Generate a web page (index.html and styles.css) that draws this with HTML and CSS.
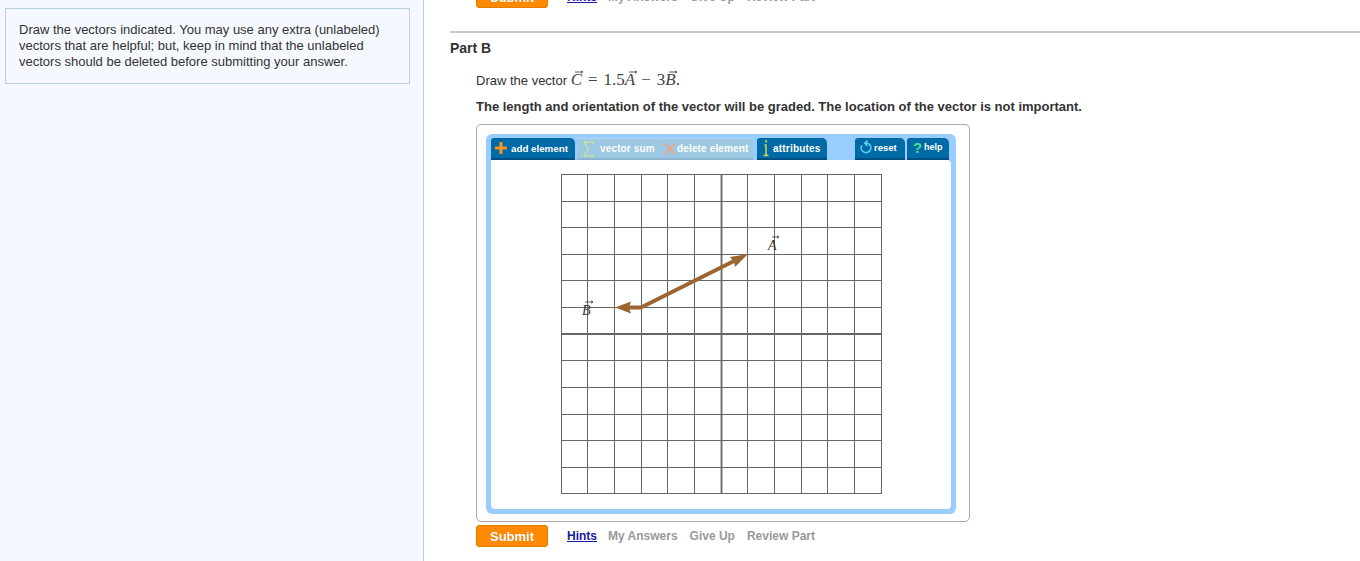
FILE: index.html
```html
<!DOCTYPE html>
<html lang="en">
<head>
<meta charset="utf-8">
<title>Part B</title>
<link rel="stylesheet" href="styles.css">
</head>
<body>
<div class="page">
  <aside class="sidebar">
    <div class="note">Draw the vectors indicated. You may use any extra (unlabeled) vectors that are helpful; but, keep in mind that the unlabeled vectors should be deleted before submitting your answer.</div>
  </aside>
  <main class="main">
    <div class="actions actions-top">
      <button class="submit" type="button">Submit</button>
      <nav class="links"><a class="hint" href="#">Hints</a><span>My Answers</span><span>Give Up</span><span>Review Part</span></nav>
    </div>
    <hr class="rule">
    <h2 class="part">Part B</h2>
    <div class="content">
      <p class="prompt">Draw the vector <span class="math"><span class="vec">C<svg class="arrow" viewBox="0 0 8 4"><path d="M0 2H7.500M6 .8 7.800 2 6 3.200"/></svg></span><span class="op">=</span>1.5<span class="vec">A<svg class="arrow" viewBox="0 0 8 4"><path d="M0 2H7.500M6 .8 7.800 2 6 3.200"/></svg></span><span class="op">−</span>3<span class="vec">B<svg class="arrow" viewBox="0 0 8 4"><path d="M0 2H7.500M6 .8 7.800 2 6 3.200"/></svg></span>.</span></p>
      <p class="graded">The length and orientation of the vector will be graded. The location of the vector is not important.</p>
      <div class="applet">
        <div class="frame">
          <div class="toolbar">
            <button class="tool tool-add" type="button"><svg class="ico" viewBox="0 0 12 12"><path d="M6 0V12M0 6H12" stroke="#f7941d" stroke-width="3"/></svg>add element</button>
            <button class="tool tool-off tool-sum" type="button"><svg class="ico" viewBox="0 0 11 16"><path d="M10.500 3V1H1L5.500 8 1 15H10.500V13" fill="none" stroke="#d9ee7c" stroke-width="1"/></svg>vector sum</button>
            <button class="tool tool-off tool-del" type="button"><svg class="ico" viewBox="0 0 12 12"><path d="M1 1 11 11M11 1 1 11" stroke="#f0a58a" stroke-width="2"/></svg>delete element</button>
            <button class="tool tool-attr" type="button"><svg class="ico" viewBox="0 0 6 18"><path d="M3 1V3.500M3 5.500V16.500M.5 16.500H5.500M1.500 6H3" fill="none" stroke="#d9d84a" stroke-width="1.500"/></svg>attributes</button>
            <span class="spacer"></span>
            <button class="tool tool-reset" type="button"><svg class="ico" viewBox="0 0 12 14"><path d="M1.800 5.500A4.800 4.800 0 1 0 7.500 3.200H5M7.500 .6 4.800 3.200 7.500 5.800" fill="none" stroke="#4fd0ee" stroke-width="1.600"/></svg>reset</button>
            <button class="tool tool-help" type="button"><span class="q">?</span>help</button>
          </div>
          <div class="canvas">
            <svg class="grid" viewBox="0 0 321 321" width="321" height="321">
              <g class="lines">
                <path d="M.5 0V320M26.500 0V320M53.500 0V320M80.500 0V320M106.500 0V320M133.500 0V320M186.500 0V320M213.500 0V320M240.500 0V320M266.500 0V320M293.500 0V320M320.500 0V320"/>
                <path d="M0 .5H321M0 27.500H321M0 53.500H321M0 80.500H321M0 106.500H321M0 133.500H321M0 186.500H321M0 213.500H321M0 240.500H321M0 266.500H321M0 293.500H321M0 319.500H321"/>
              </g>
              <path class="axis" d="M160.500 0V320M0 160H321"/>
              <path class="vector" d="M80 133.500 176 85.500"/>
              <path class="vector" d="M81 133.500H66"/>
              <path class="head" d="M187 80 169 83 173 88 174 93Z"/>
              <path class="head" d="M54 133.500 70 127.500 68 133.500 70 139.500Z"/>
              <text class="label" x="207" y="76">A</text>
              <path class="label-arrow" d="M211 63H217.500M216 61.800 218 63 216 64.200"/>
              <text class="label" x="21" y="141">B</text>
              <path class="label-arrow" d="M24 128H31.500M30 126.800 32 128 30 129.200"/>
            </svg>
          </div>
        </div>
      </div>
      <div class="actions actions-bottom">
        <button class="submit" type="button">Submit</button>
        <nav class="links"><a class="hint" href="#">Hints</a><span>My Answers</span><span>Give Up</span><span>Review Part</span></nav>
      </div>
    </div>
  </main>
</div>
</body>
</html>
```
FILE: styles.css
```css
* { box-sizing: border-box; }
html, body { margin: 0; height: 561px; overflow: hidden; background: #fff; }
body { font-family: "Liberation Sans", Arial, sans-serif; font-size: 12px; color: #333; }
.page { display: flex; height: 561px; overflow: hidden; }
.sidebar { width: 424px; flex: none; background: #f5f9ff; border-right: 1px solid #bccfdf; padding: 8px 13px 0 5px; }
.note { height: 76px; border: 1px solid #b7d0e2; padding: 13px 13px 0; line-height: 16px; font-size: 13px; color: #333; }
.main { flex: 1; padding-left: 26px; margin-top: -14px; min-width: 0; }
.actions { display: flex; align-items: center; height: 22px; }
.actions-top { margin-left: 26px; }
.actions-bottom { margin-top: 3px; }
.submit { width: 72px; height: 22px; padding: 0; border: 1px solid #e57d00; border-radius: 3px; background: #ff8a00; color: #fff; font: bold 13px "Liberation Sans", Arial, sans-serif; text-shadow: 0 0 1px #b86a00; }
.links { display: flex; gap: 12px; margin-left: 19px; font-weight: bold; font-size: 12px; color: #999; }
.hint { margin-right: -1px; color: #1a1a9c; text-decoration: underline; }
.rule { height: 2px; margin: 23px 0 0; border: 0; background: #c9c9c9; }
.part { margin: 7px 0 0; font-size: 14px; line-height: 16px; font-weight: bold; color: #333; }
.content { margin-left: 26px; }
.prompt { margin: 14px 0 0; height: 22px; line-height: 22px; font-size: 13px; display: flex; align-items: baseline; white-space: pre; }
.math { font: 17px "Liberation Serif", serif; color: #444; }
.op { margin: 0 6px; }
.vec { position: relative; font-style: italic; display: inline-block; }
.arrow { position: absolute; left: 4px; top: 0; width: 8px; height: 4px; fill: none; stroke: #333; stroke-width: .8; }
.graded { margin: 7px 0 0; font-weight: bold; font-size: 13px; line-height: 16px; color: #333; }
.applet { width: 494px; height: 398px; margin-top: 9px; padding: 9px; border: 1px solid #aaa; border-radius: 5px; background: #fff; }
.frame { display: flex; flex-direction: column; width: 470px; height: 380px; padding: 4px 5px 5px; border-radius: 6px; background: #99ccff; }
.toolbar { display: flex; align-items: flex-start; height: 22px; }
.tool { display: flex; align-items: center; height: 22px; padding: 0; border: 0; border-bottom: 2px solid #004f80; border-radius: 3px 5px 0 0; background: #006aa6; color: #fff; font: bold 10px "Liberation Sans", Arial, sans-serif; white-space: nowrap; }
.tool-off { background: #9cc8e2; border-bottom-color: #8db5cf; border-top: 1px solid #b5d9ee; letter-spacing: .15px; }
.ico { flex: none; }
.tool-add { width: 84px; padding-left: 4px; font-size: 9.750px; }
.tool-add .ico { width: 12px; height: 12px; margin-right: 4px; }
.tool-sum { width: 82px; margin-left: 2px; padding-left: 6px; }
.tool-sum .ico { width: 11px; height: 16px; margin-right: 6px; }
.tool-del { width: 94px; padding-left: 5px; }
.tool-del .ico { width: 12px; height: 12px; margin-right: 1px; }
.tool-attr { width: 70px; margin-left: 4px; padding-left: 6px; letter-spacing: .2px; }
.tool-attr .ico { width: 6px; height: 18px; margin-right: 4px; }
.spacer { width: 28px; flex: none; }
.tool-reset { width: 50px; padding: 0 0 2px 5px; font-size: 9.500px; }
.tool-reset .ico { width: 12px; height: 14px; margin-right: 2px; }
.tool-help { width: 42px; margin-left: 2px; padding: 0 0 2px 5px; font-size: 9px; }
.q { width: 11px; margin-right: 1px; color: #48e08a; font-size: 15px; line-height: 1; }
.canvas { flex: 1; background: #fff; border-radius: 0 4px 4px 4px; padding: 14px 0 0 70px; }
.grid { display: block; }
.lines path { fill: none; stroke: #666; stroke-width: 1; }
.axis { fill: none; stroke: #666; stroke-width: 1.800; }
.vector { fill: none; stroke: #9c6630; stroke-width: 4; }
.head { fill: #9c6630; }
.label { font: italic 14px "Liberation Serif", serif; fill: #333; }
.label-arrow { fill: none; stroke: #333; stroke-width: .8; }
```
